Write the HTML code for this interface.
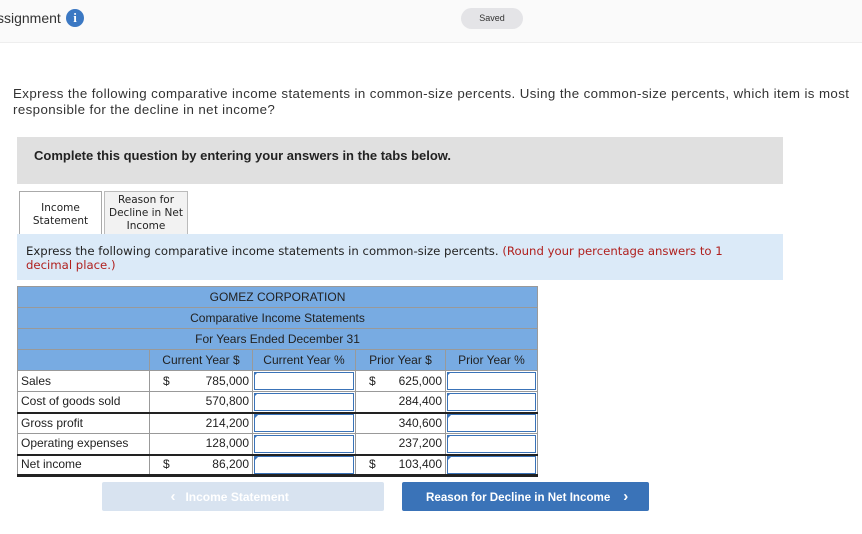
<!DOCTYPE html>
<html><head><style>
body{margin:0;width:862px;height:534px;position:relative;background:#fff;font-family:"Liberation Sans",Arial,sans-serif;overflow:hidden}
.a{position:absolute}
table{border-collapse:collapse;position:absolute;left:17px;top:286px;width:521px;font-size:12px;color:#222}
td{border:1px solid #999;height:21px;line-height:17px;padding:0 3px;white-space:nowrap;box-sizing:border-box}
.h td{background:#78abe2;text-align:center;height:21px}
.num{text-align:right;position:relative}
.inp{border:1px solid #999;padding:0}
.inp div{border:1px solid #3a73b8;height:16px;margin:0 1px;background:#fff}
.mk:after{content:"";position:absolute;right:-6px;top:1px;border-left:4px solid #3a73b8;border-bottom:4px solid transparent}
.thick td{border-bottom:2px solid #222}
</style></head><body>
<div class="a" style="left:0;top:0;width:862px;height:42px;background:#fafafa;border-bottom:1px solid #eee"></div>
<div class="a" style="left:-3px;top:10px;font-size:14px;color:#333">ssignment</div>
<div class="a" style="left:66px;top:9px;width:18px;height:18px;border-radius:50%;background:#3b78c3;color:#fff;font:bold 13px 'Liberation Serif',serif;text-align:center;line-height:18px">i</div>
<div class="a" style="left:461px;top:8px;width:62px;height:21px;border-radius:11px;background:#e4e4e7;font-size:9px;color:#333;text-align:center;line-height:20px">Saved</div>
<div class="a" style="left:13px;top:86px;width:845px;font-size:13.3px;letter-spacing:0.4px;line-height:16px;color:#333">Express the following comparative income statements in common-size percents. Using the common-size percents, which item is most responsible for the decline in net income?</div>
<div class="a" style="left:17px;top:137px;width:766px;height:47px;background:#e0e0e0"></div>
<div class="a" style="left:34px;top:148px;font-size:13px;font-weight:bold;color:#222">Complete this question by entering your answers in the tabs below.</div>
<div class="a" style="left:19px;top:191px;width:81px;height:44px;background:#fff;border:1px solid #aaa;border-bottom:none;font:10.5px 'DejaVu Sans',sans-serif;text-align:center;line-height:13px;color:#222"><div style="padding-top:10px">Income<br>Statement</div></div>
<div class="a" style="left:104px;top:191px;width:82px;height:42px;background:#f2f2f2;border:1px solid #bbb;font:10.5px 'DejaVu Sans',sans-serif;text-align:center;line-height:13px;color:#222"><div style="padding-top:2px">Reason for<br>Decline in Net<br>Income</div></div>
<div class="a" style="left:17px;top:234px;width:766px;height:46px;background:#dbeaf8"></div>
<div class="a" style="left:26px;top:244px;width:740px;font:11.7px 'DejaVu Sans',sans-serif;line-height:14px;color:#222">Express the following comparative income statements in common-size percents. <span style="color:#b0201e">(Round your percentage answers to 1 decimal place.)</span></div>
<table>
<tr class="h"><td colspan="5">GOMEZ CORPORATION</td></tr>
<tr class="h"><td colspan="5">Comparative Income Statements</td></tr>
<tr class="h"><td colspan="5">For Years Ended December 31</td></tr>
<tr class="h"><td style="width:132px"></td><td style="width:103px">Current Year $</td><td style="width:103px">Current Year %</td><td style="width:90px">Prior Year $</td><td>Prior Year %</td></tr>
<tr><td>Sales</td><td class="num mk"><span style="float:left;padding-left:10px">$</span>785,000</td><td class="inp"><div></div></td><td class="num mk"><span style="float:left;padding-left:10px">$</span>625,000</td><td class="inp"><div></div></td></tr>
<tr class="thick"><td>Cost of goods sold</td><td class="num mk">570,800</td><td class="inp"><div></div></td><td class="num mk">284,400</td><td class="inp"><div></div></td></tr>
<tr><td>Gross profit</td><td class="num mk">214,200</td><td class="inp"><div></div></td><td class="num mk">340,600</td><td class="inp"><div></div></td></tr>
<tr class="thick"><td>Operating expenses</td><td class="num mk">128,000</td><td class="inp"><div></div></td><td class="num mk">237,200</td><td class="inp"><div></div></td></tr>
<tr style="border-bottom:3px solid #222"><td>Net income</td><td class="num mk"><span style="float:left;padding-left:10px">$</span>86,200</td><td class="inp"><div></div></td><td class="num mk"><span style="float:left;padding-left:10px">$</span>103,400</td><td class="inp"><div></div></td></tr>
</table>
<div class="a" style="left:102px;top:482px;width:282px;height:29px;background:#d8e3f0;border-radius:2px;color:#fff;font-weight:bold;font-size:12px;line-height:29px;text-align:center"><span style="font-size:15px">‹</span>&nbsp;&nbsp;&nbsp;Income Statement&nbsp;&nbsp;&nbsp;&nbsp;&nbsp;&nbsp;&nbsp;&nbsp;</div>
<div class="a" style="left:402px;top:482px;width:247px;height:29px;background:#3a73b8;border-radius:2px;color:#fff;font-weight:bold;font-size:11.6px;line-height:29px;text-align:center">&nbsp;Reason for Decline in Net Income&nbsp;&nbsp;&nbsp;&nbsp;<span style="font-size:15px">›</span></div>
</body></html>
